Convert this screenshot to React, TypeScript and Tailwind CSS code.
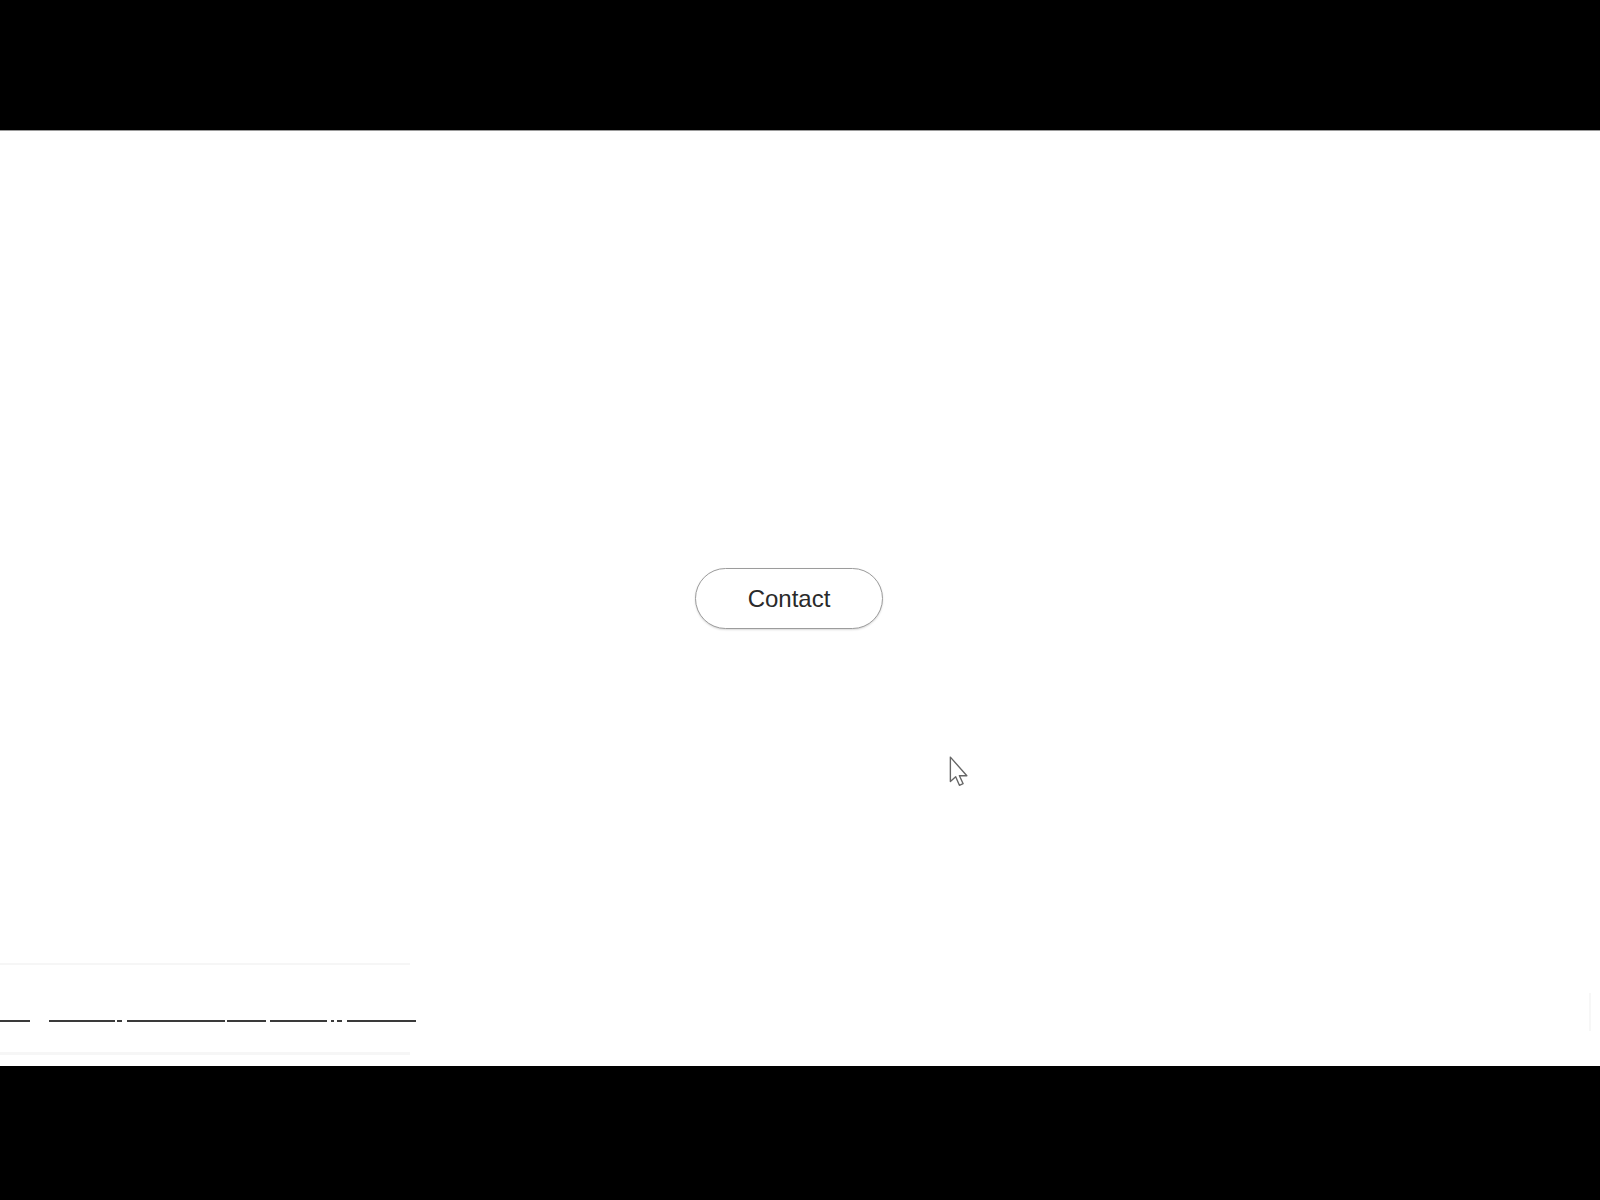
import React from "react";

export default function App() {
  const segs = [
    [0, 30],
    [49, 115],
    [117, 122],
    [127, 225],
    [227, 266],
    [270, 327],
    [331, 334],
    [337, 342],
    [347, 416],
  ];
  return (
    <div className="w-[1600px] h-[1200px] bg-black flex flex-col" style={{ fontFamily: '"Liberation Sans", Arial, sans-serif' }}>
      <div className="h-[130px] bg-black" />
      <div className="relative h-[936px] bg-white border-t border-[#9a9a9a] flex flex-col">
        <div className="pl-[695px] pt-[437px]">
          <button className="w-[188px] h-[61px] rounded-full border-[1.5px] border-[#9c9c9c] bg-white text-[24px] text-[#2a2a2a] flex items-center justify-center shadow-[0_1px_2px_rgba(0,0,0,0.15)]">
            Contact
          </button>
        </div>
        <div className="mt-[334px] w-[410px] h-[92px] flex flex-col justify-center bg-white border-t-2 border-b-[3px] border-[#f6f6f6]">
          <div className="relative h-[2px] w-[420px] mt-[24px]">
            {segs.map(([a, b], i) => (
              <div key={i} className="absolute top-0 h-[2px] bg-[#3a3a3a]" style={{ left: a, width: b - a }} />
            ))}
          </div>
        </div>
        <div className="absolute right-[9px] top-[862px] w-[2px] h-[38px] bg-[#f7f7f7]" />
        <svg className="absolute left-[948px] top-[624px]" width="26" height="34" viewBox="0 0 24 32">
          <path
            d="M2 2 L2 25 L7 20.5 L10.5 28.5 L14 27 L10.5 19.5 L17.5 19.5 Z"
            fill="white"
            stroke="#666"
            strokeWidth="1.3"
            strokeLinejoin="round"
          />
        </svg>
      </div>
      <div className="flex-1 bg-black" />
    </div>
  );
}
